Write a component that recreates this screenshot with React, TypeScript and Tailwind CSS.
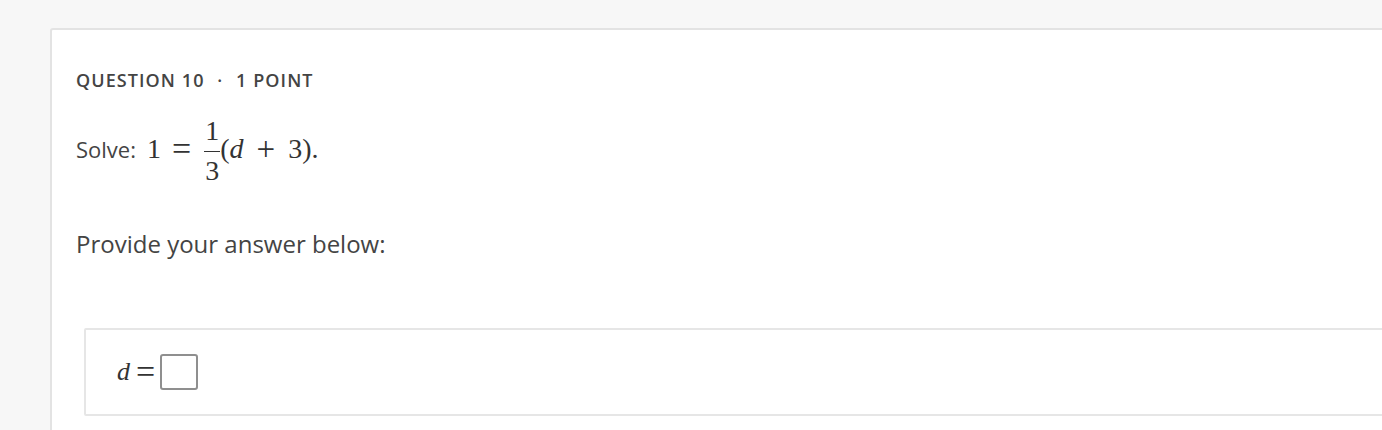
export default function App() {
  const serif = { fontFamily: '"Liberation Serif", "Times New Roman", serif' };
  return (
    <div className="h-[430px] w-full overflow-hidden bg-[#f7f7f7]" style={{ fontFamily: '"Open Sans", sans-serif' }}>
      <div className="ml-[50px] mt-[28px] w-[1360px] h-[500px] rounded-[3px] border-2 border-[#e3e3e3] bg-white pl-[24px] pt-[36px]">
        <div className="text-[18px] font-semibold tracking-[0.06em] text-[#444] leading-[28px]">
          QUESTION 10 <span className="mx-[7px]">·</span> 1 POINT
        </div>

        <div className="mt-[24px] flex items-center text-[22px] text-[#444]">
          <span className="pb-[4px]">Solve:</span>
          <span className="ml-[11px] flex items-center text-[28px] text-[#333]" style={serif}>
            <span className="pb-[4px] leading-[28px]">1</span>
            <span className="ml-[11px] mr-[13px] pb-[4px] text-[34px] leading-[28px]">=</span>
            <span className="inline-flex flex-col items-center leading-[26px] text-[28px]">
              <span className="px-[1px] pb-[7px]">1</span>
              <span className="h-[1px] w-full bg-[#333]" />
              <span className="px-[1px] pt-[6px]">3</span>
            </span>
            <span className="pb-[4px] leading-[28px]">(</span>
            <span className="pb-[4px] italic leading-[28px]">d</span>
            <span className="mx-[13px] pb-[4px] text-[33px] leading-[28px]">+</span>
            <span className="pb-[4px] leading-[28px]">3).</span>
          </span>
        </div>

        <div className="mt-[44px] text-[24px] text-[#444] leading-[32px]">Provide your answer below:</div>

        <div className="ml-[8px] mt-[68px] flex h-[88px] items-center rounded-[2px] border-2 border-[#e6e6e6] pl-[31px]">
          <div className="flex items-center text-[26px] text-[#333]" style={serif}>
            <span className="italic leading-[26px]">d</span>
            <span className="ml-[6px] mr-[5px] text-[34px] leading-[26px]">=</span>
            <span className="inline-block h-[36px] w-[38px] rounded-[3px] border-2 border-[#8f8f8f]" />
          </div>
        </div>
      </div>
    </div>
  );
}
